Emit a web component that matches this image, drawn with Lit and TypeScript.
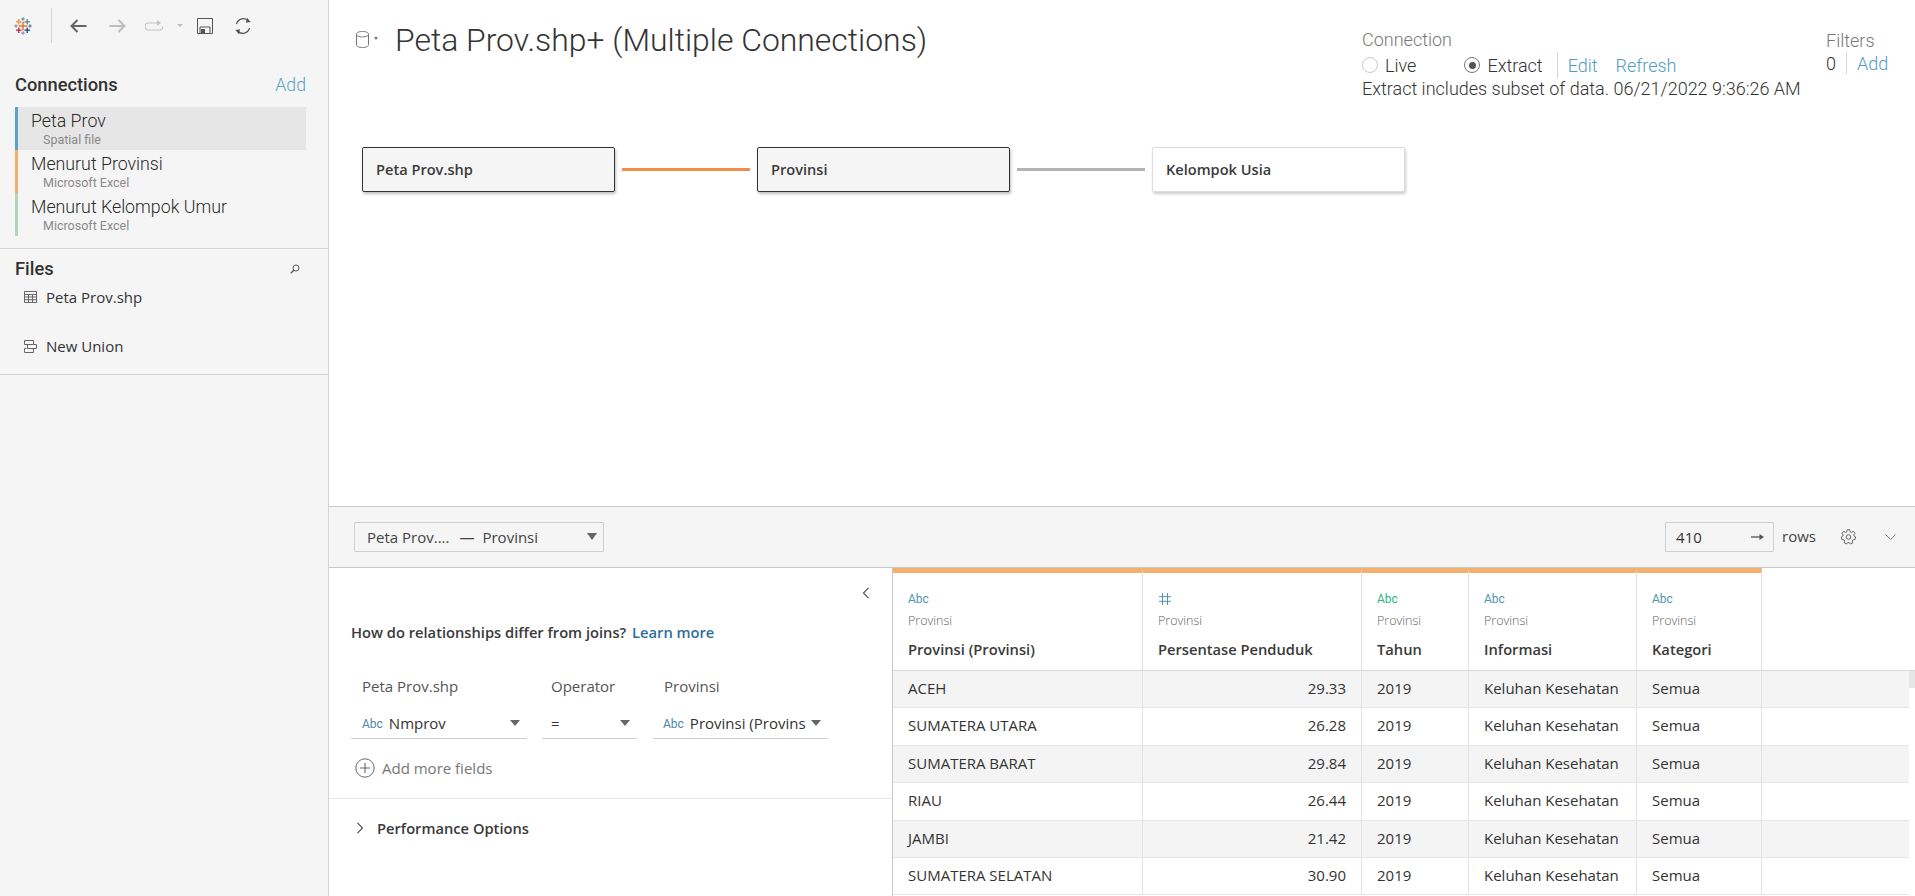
import { LitElement, html, css, svg } from "lit";
import { customElement } from "lit/decorators.js";

const cross = (x: number, y: number, s: number, c: string, w = 1) =>
  svg`<path d="M${x - s} ${y}H${x + s}M${x} ${y - s}V${y + s}" stroke="${c}" stroke-width="${w}" fill="none"/>`;

const logo = html`<svg class="logo" width="20" height="20" viewBox="-10 -10 20 20">
  ${cross(0, 0, 4.2, "#e8762c", 1.5)}
  ${cross(-4.2, -4.2, 2.8, "#f28e2b", 1.3)}
  ${cross(4.2, -4.2, 2.8, "#5b879b", 1.3)}
  ${cross(-4.2, 4.2, 2.8, "#c72037", 1.3)}
  ${cross(4.2, 4.2, 2.8, "#1f447e", 1.3)}
  ${cross(0, -7, 1.7, "#5b879b", 1.1)}
  ${cross(-7, 0, 1.7, "#7099a6", 1.1)}
  ${cross(7, 0, 1.7, "#5b6591", 1.1)}
  ${cross(0, 7, 1.7, "#7b83a8", 1.1)}
</svg>`;

const rows = [
  ["ACEH", "29.33"],
  ["SUMATERA UTARA", "26.28"],
  ["SUMATERA BARAT", "29.84"],
  ["RIAU", "26.44"],
  ["JAMBI", "21.42"],
  ["SUMATERA SELATAN", "30.90"],
];

const heads = [
  { t: "abc", title: "Provinsi (Provinsi)" },
  { t: "hash", title: "Persentase Penduduk" },
  { t: "green", title: "Tahun" },
  { t: "abc", title: "Informasi" },
  { t: "abc", title: "Kategori" },
];

const caret = html`<span class="caret"></span>`;

@customElement("app-root")
export class AppRoot extends LitElement {
  static styles = css`
    :host { display: block; width: 1915px; height: 896px; overflow: hidden; background: #fff; color: #333;
      font-family: Roboto, "Liberation Sans", sans-serif; font-size: 14px; --os: "Open Sans", Roboto, sans-serif; }
    * { box-sizing: border-box; }
    .app { display: flex; height: 896px; }
    .side { width: 329px; flex: none; background: #f5f5f5; border-right: 1px solid #d4d4d4; }
    .tools { height: 51px; display: flex; align-items: center; padding-left: 13px; }
    .logo { display: block; flex: none; }
    .tdiv { width: 1px; height: 35px; background: #d4d4d4; margin: 0 18px 0 18px; flex: none; }
    .tools svg { flex: none; display: block; }
    .tools .i2 { margin-left: 22px; }
    .tools .i3 { margin-left: 19px; }
    .tools .c { width: 0; height: 0; border-left: 3px solid transparent; border-right: 3px solid transparent; border-top: 3px solid #bdbdbd; margin-left: 13px; flex: none; }
    .tools .i4 { margin-left: 14px; }
    .tools .i5 { margin-left: 21px; }
    .conn-h { display: flex; justify-content: space-between; align-items: center; margin: 22px 22px 0 15px; height: 22px; }
    .h { font-weight: 500; font-size: 18.3px; color: #333; }
    .add { color: #5ba4c9; font-size: 17.7px; font-weight: 300; position: relative; top: 1px; }
    .conns { margin: 12px 22px 0 15px; }
    .conn { height: 43px; border-left: 3px solid; padding: 3px 0 0 13px; }
    .conn.on { background: #e6e6e6; }
    .conn .n { font-size: 17.8px; font-weight: 300; line-height: 21px; color: #2a2a2a; white-space: nowrap; }
    .conn .s { font-size: 12.5px; color: #8a8a8a; line-height: 15px; padding-left: 12px; margin-top: 1px; font-weight: 400; }
    .files { border-top: 1px solid #d4d4d4; margin-top: 12px; height: 127px; border-bottom: 1px solid #d4d4d4; padding: 9px 0 0 15px; position: relative; }
    .files-h { display: flex; justify-content: space-between; align-items: center; height: 21px; padding-right: 28px; }
    .fi { display: flex; align-items: center; height: 22px; padding-left: 9px; gap: 9px; font-family: var(--os); font-size: 15px; color: #333; }
    .fi.one { margin-top: 7px; }
    .fi.two { margin-top: 27px; }

    .main { flex: 1; display: flex; flex-direction: column; min-width: 0; }
    .top { height: 506px; flex: none; background: #fff; position: relative; }
    .hd { display: flex; height: 122px; padding-top: 24px; }
    .ttl { display: flex; align-items: flex-start; width: 1033px; padding-left: 27px; }
    .ttl svg { margin-top: 7px; flex: none; }
    .ttl .ca { width: 0; height: 0; border-left: 2.5px solid transparent; border-right: 2.5px solid transparent; border-top: 3px solid #777; margin: 13px 0 0 5px; flex: none; }
    .ttl h1 { margin: -3px 0 0 17px; font-weight: 300; font-size: 31.9px; line-height: 38px; color: #333; white-space: nowrap; }
    .cp { width: 464px; font-weight: 300; font-size: 18px; color: #333; padding-top: 6px; }
    .cp .lb { color: #777; height: 20px; line-height: 20px; }
    .cp .rd { display: flex; align-items: center; height: 26px; margin-top: 2px; }
    .radio { width: 16px; height: 16px; border: 1px solid #c9c9c9; border-radius: 50%; flex: none; background: #fff; margin-right: 7px; }
    .radio.on { border-color: #777; position: relative; }
    .radio.on::after { content: ""; position: absolute; left: 3.500px; top: 3.500px; width: 7px; height: 7px; border-radius: 50%; background: #555; }
    .cp .ext { margin-left: 48px; }
    .sep { width: 1px; height: 26px; background: #d4d4d4; margin: 0 10px 0 14px; flex: none; }
    .lnk { color: #4f9dc4; }
    .cp .ref { margin-left: 18px; }
    .cp .ln3 { height: 24px; line-height: 24px; margin-top: -1px; white-space: nowrap; }
    .fp { font-weight: 300; font-size: 18px; padding-top: 7px; }
    .fp .lb { color: #777; height: 20px; line-height: 20px; }
    .fp .v { display: flex; align-items: center; height: 24px; margin-top: 0; }
    .fp .sep { height: 22px; margin: 0 10px 0 10px; }
    .canvas { display: flex; align-items: center; padding: 25px 0 0 33px; }
    .node { width: 253px; height: 45px; display: flex; align-items: center; padding: 0 0 2px 13px; font-family: var(--os); font-weight: 600; font-size: 14.6px; color: #3a3a3a;
      border-radius: 2px; }
    .node.sel { background: #f5f5f5; border: 1px solid #333; box-shadow: 1px 2px 3px rgba(0,0,0,.25); }
    .node.plain { background: #fff; border: 1px solid #dcdcdc; box-shadow: 1px 2px 3px rgba(0,0,0,.2); }
    .link { height: 3px; width: 128px; margin: 0 7px; flex: none; }
    .bar { height: 62px; flex: none; background: #f5f5f5; border-top: 1px solid #c8c8c8; border-bottom: 1px solid #c8c8c8; display: flex; align-items: center; padding: 0 19px 0 25px; font-family: var(--os); }
    .sel-box { width: 250px; height: 30px; border: 1px solid #cfcfcf; border-radius: 1px; display: flex; align-items: center; padding: 0 6px 1px 12px; font-size: 15px; color: #444; white-space: nowrap; }
    .sel-box .d { margin: 0 8px 0 10px; }
    .caret { width: 0; height: 0; border-left: 5px solid transparent; border-right: 5px solid transparent; border-top: 7px solid #666; margin-left: auto; flex: none; }
    .sp { flex: 1; }
    .num { width: 109px; height: 30px; border: 1px solid #cfcfcf; border-radius: 1px; display: flex; align-items: center; justify-content: space-between; padding: 0 9px 1px 10px; font-size: 15px; }
    .rows { margin-left: 8px; font-size: 15px; color: #444; position: relative; top: -1px; }
    .gear { margin-left: 25px; display: block; }
    .chev { margin-left: 29px; display: block; }

    .low { flex: 1; display: flex; min-height: 0; font-family: var(--os); }
    .rel { width: 563px; flex: none; position: relative; }
    .back { display: flex; justify-content: flex-end; padding: 19px 22px 0 0; height: 47px; }
    .q { padding-left: 22px; font-weight: 600; font-size: 14.7px; color: #3a3a3a; height: 36px; line-height: 35px; white-space: nowrap; }
    .q .lm { color: #2d6e9b; margin-left: 2px; }
    .cols { display: grid; grid-template-columns: 191px 111px 175px; padding-left: 22px; margin-top: 20px; }
    .cols .l { padding-left: 11px; height: 31px; line-height: 31px; color: #555; font-size: 15px; }
    .cols .l.b { padding-left: 9px; }
    .cols .l.c { padding-left: 11px; }
    .fld { height: 32px; border-bottom: 1px solid #cfcfcf; display: flex; align-items: center; padding: 0 7px 0 11px; margin-top: 5px; color: #333; font-size: 15px; width: 176px; }
    .fld.op { width: 95px; padding-left: 9px; }
    .fld.pr { width: 175px; padding-left: 10px; }
    .abc { font-family: Roboto, sans-serif; font-size: 12px; color: #4a86a8; margin-right: 6px; margin-top: 2px; flex: none; }
    .fld .cl { overflow: hidden; width: 116px; white-space: nowrap; flex: none; }
    .fld .caret { border-left-width: 5px; border-right-width: 5px; border-top-width: 6px; }
    .more { display: flex; align-items: center; height: 36px; padding-left: 26px; margin-top: 11px; gap: 7px; color: #777; font-size: 15px; }
    .hr { border-top: 1px solid #e6e6e6; margin-top: 12px; }
    .perf { display: flex; align-items: center; padding: 19px 0 0 27px; gap: 13px; font-weight: 600; font-size: 14.7px; color: #3a3a3a; }

    .grid { flex: 1; display: flex; flex-direction: column; border-left: 1px solid #c8c8c8; min-width: 0; }
    .r { display: grid; grid-template-columns: 250px 219px 107px 168px 125px 1fr; }
    .r > div { border-right: 1px solid #e2e2e2; padding-left: 15px; }
    .r > div:last-child { border-right: 0; }
    .head { height: 103px; border-bottom: 1px solid #d9d9d9; }
    .head > div { position: relative; padding-top: 17px; }
    .head > div:not(:last-child) { border-top: 5px solid #f5ae6c; }
    .tp { height: 18px; font-family: Roboto, sans-serif; font-size: 12px; line-height: 18px; color: #4f94b0; display: flex; align-items: center; }
    .tp.green { color: #2ab58a; }
    .src { font-size: 12.5px; font-weight: 300; color: #666; line-height: 16px; margin-top: 5px; }
    .tt { font-weight: 600; font-size: 14.7px; color: #3a3a3a; line-height: 18px; margin-top: 11px; white-space: nowrap; }
    .body { display: flex; flex: 1; min-height: 0; }
    .rs { flex: 1; min-width: 0; }
    .sb { width: 6px; flex: none; }
    .thumb { height: 17px; background: #e6e6e6; }
    .row { height: 37.4px; border-bottom: 1px solid #e6e6e6; align-items: stretch; font-size: 15px; line-height: 34.5px; color: #333; white-space: nowrap; }
    .row.odd { background: #f4f4f4; }
    .row .nm { text-align: right; padding-right: 15px; }
  `;

  render() {
    return html`<div class="app">
      <aside class="side">
        <div class="tools">
          ${logo}
          <span class="tdiv"></span>
          <svg width="17" height="14" viewBox="0 0 17 14"><path d="M16.5 7H1.5M7.5 1L1.5 7L7.5 13" fill="none" stroke="#666" stroke-width="2"/></svg>
          <svg class="i2" width="17" height="14" viewBox="0 0 17 14"><path d="M.5 7H15.5M9.5 1L15.5 7L9.5 13" fill="none" stroke="#bdbdbd" stroke-width="2"/></svg>
          <svg class="i3" width="19" height="12" viewBox="0 0 19 12"><path d="M13 3H3.5A2.7 2.7 0 0 0 3.5 10H15A2.7 2.7 0 0 0 17.500 6.500" fill="none" stroke="#c4c4c4" stroke-width="1.2"/><path d="M12 0V6L16 3Z" fill="#c4c4c4"/></svg>
          <span class="c"></span>
          <svg class="i4" width="16" height="16" viewBox="0 0 16 16"><path d="M.5.5H15.500V15.500H.5ZM3 15V9H13V15" fill="none" stroke="#555" stroke-width="1"/><rect x="4" y="11" width="4" height="4" fill="#555"/></svg>
          <svg class="i5" width="18" height="18" viewBox="0 0 18 18"><path d="M2.500 7A7 7 0 0 1 14.500 4M15.500 11A7 7 0 0 1 3.500 14" fill="none" stroke="#555" stroke-width="1.200"/><path d="M13 .8L16.600 5L12 5.800ZM5 17.200L1.400 13L6 12.200Z" fill="#555"/></svg>
        </div>
        <div class="conn-h"><span class="h">Connections</span><span class="add">Add</span></div>
        <div class="conns">
          <div class="conn on" style="border-color:#5ba3c4"><div class="n">Peta Prov</div><div class="s">Spatial file</div></div>
          <div class="conn" style="border-color:#f5ae6c"><div class="n">Menurut Provinsi</div><div class="s">Microsoft Excel</div></div>
          <div class="conn" style="border-color:#aed8bd"><div class="n">Menurut Kelompok Umur</div><div class="s">Microsoft Excel</div></div>
        </div>
        <div class="files">
          <div class="files-h"><span class="h">Files</span>
            <svg width="10" height="10" viewBox="0 0 10 10"><circle cx="6" cy="4" r="3" fill="none" stroke="#555" stroke-width="1"/><path d="M3.800 6.200L.8 9.200" stroke="#555" stroke-width="1.300"/></svg>
          </div>
          <div class="fi one"><svg width="13" height="12" viewBox="0 0 13 12"><path d="M.5.5H12.500V11.500H.5ZM.5 3.500H12.500M.5 6H12.500M.5 8.700H12.500M4.500 3.500V11.500M8.500 3.500V11.500" fill="none" stroke="#666" stroke-width="1"/></svg><span>Peta Prov.shp</span></div>
          <div class="fi two"><svg width="13" height="13" viewBox="0 0 13 13"><path d="M.5.5H9.500V4.500H.5ZM3.500 4.500V8.500H12.500V4.500H9.500M2.500 8.500H.5V12.500H9.500V8.500" fill="none" stroke="#666" stroke-width="1"/></svg><span>New Union</span></div>
        </div>
      </aside>
      <main class="main">
        <section class="top">
          <div class="hd">
            <div class="ttl">
              <svg width="13" height="17" viewBox="0 0 13 17"><path d="M.5 3.200C.5 1.500 3 .5 6.500 .5S12.500 1.500 12.500 3.200V13.800C12.500 15.500 10 16.500 6.500 16.500S.5 15.500 .5 13.800ZM.5 3.200C.5 4.900 3 5.900 6.500 5.900S12.500 4.900 12.500 3.200" fill="none" stroke="#777" stroke-width="1"/></svg>
              <span class="ca"></span>
              <h1>Peta Prov.shp+ (Multiple Connections)</h1>
            </div>
            <div class="cp">
              <div class="lb">Connection</div>
              <div class="rd"><span class="radio"></span><span>Live</span><span class="radio on ext"></span><span>Extract</span><span class="sep"></span><span class="lnk">Edit</span><span class="lnk ref">Refresh</span></div>
              <div class="ln3">Extract includes subset of data. 06/21/2022 9:36:26 AM</div>
            </div>
            <div class="fp">
              <div class="lb">Filters</div>
              <div class="v"><span>0</span><span class="sep"></span><span class="lnk">Add</span></div>
            </div>
          </div>
          <div class="canvas">
            <div class="node sel">Peta Prov.shp</div>
            <span class="link" style="background:#f28e4d"></span>
            <div class="node sel">Provinsi</div>
            <span class="link" style="background:#b3b3b3"></span>
            <div class="node plain">Kelompok Usia</div>
          </div>
        </section>
        <section class="bar">
          <div class="sel-box"><span>Peta Prov....</span><span class="d">—</span><span>Provinsi</span>${caret}</div>
          <span class="sp"></span>
          <div class="num"><span>410</span><svg width="13" height="8" viewBox="0 0 13 8"><path d="M0 4H11" stroke="#555" stroke-width="1.300"/><path d="M8.500 1L13 4L8.500 7Z" fill="#555"/></svg></div>
          <span class="rows">rows</span>
          <svg class="gear" width="15" height="16" viewBox="0 0 15 16"><path d="M6.200.8H8.800L9.200 2.800L10.600 3.400L12.300 2.300L14 4.400L12.800 6L13.100 7.100L14.700 8L14 10.600L12.200 10.700L11.300 12L11.800 13.800L9.400 15L8.300 13.600H6.700L5.600 15L3.200 13.800L3.700 12L2.800 10.700L1 10.600L.3 8L1.900 7.100L2.200 6L1 4.400L2.700 2.300L4.400 3.400L5.800 2.800Z" fill="none" stroke="#666" stroke-width="1"/><circle cx="7.500" cy="8" r="2.300" fill="none" stroke="#666" stroke-width="1"/></svg>
          <svg class="chev" width="11" height="6" viewBox="0 0 11 6"><path d="M.5.5L5.500 5.500L10.500.5" fill="none" stroke="#777" stroke-width="1"/></svg>
        </section>
        <section class="low">
          <div class="rel">
            <div class="back"><svg width="8" height="12" viewBox="0 0 8 12"><path d="M6.500.8L1.500 6L6.500 11.200" fill="none" stroke="#555" stroke-width="1.200"/></svg></div>
            <div class="q">How do relationships differ from joins? <span class="lm">Learn more</span></div>
            <div class="cols">
              <div class="l">Peta Prov.shp</div><div class="l b">Operator</div><div class="l c">Provinsi</div>
              <div class="fld"><span class="abc">Abc</span><span>Nmprov</span>${caret}</div>
              <div class="fld op"><span>=</span>${caret}</div>
              <div class="fld pr"><span class="abc">Abc</span><span class="cl">Provinsi (Provinsi)</span>${caret}</div>
            </div>
            <div class="more"><svg width="20" height="20" viewBox="0 0 20 20"><circle cx="10" cy="10" r="9.200" fill="none" stroke="#666" stroke-width="1"/><path d="M10 5V15M5 10H15" stroke="#666" stroke-width="1.100"/></svg><span>Add more fields</span></div>
            <div class="hr"></div>
            <div class="perf"><svg width="8" height="12" viewBox="0 0 8 12"><path d="M1.500.8L6.500 6L1.500 11.200" fill="none" stroke="#555" stroke-width="1.200"/></svg><span>Performance Options</span></div>
          </div>
          <div class="grid">
            <div class="r head">
              ${heads.map((h) => html`<div>
                <div class="tp ${h.t === "green" ? "green" : ""}">${h.t === "hash"
                  ? html`<svg width="14" height="14" viewBox="0 0 14 14"><path d="M4.500 1V13M9.500 1V13M1 4.700H13M1 9.300H13" stroke="#4f94b0" stroke-width="1"/></svg>`
                  : "Abc"}</div>
                <div class="src">Provinsi</div>
                <div class="tt">${h.title}</div>
              </div>`)}
              <div></div>
            </div>
            <div class="body">
              <div class="rs">
                ${rows.map((r, i) => html`<div class="r row ${i % 2 === 0 ? "odd" : ""}">
                  <div>${r[0]}</div><div class="nm">${r[1]}</div><div>2019</div><div>Keluhan Kesehatan</div><div>Semua</div><div></div>
                </div>`)}
              </div>
              <div class="sb"><div class="thumb"></div></div>
            </div>
          </div>
        </section>
      </main>
    </div>`;
  }
}
